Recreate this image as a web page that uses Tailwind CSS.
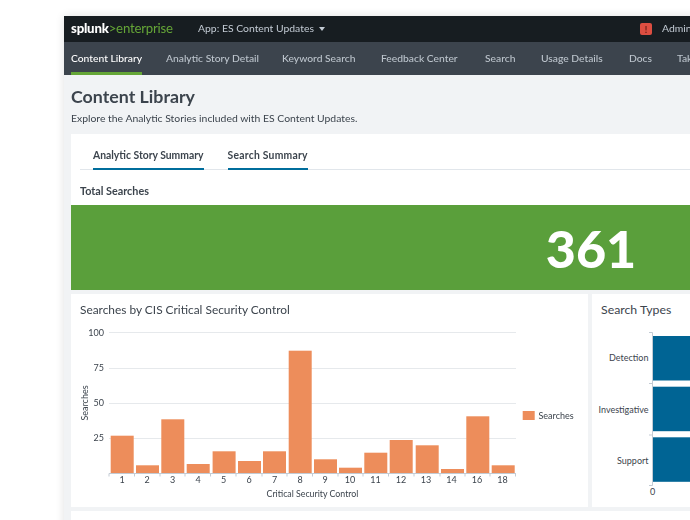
<!doctype html>
<html>
<head>
<meta charset="utf-8">
<script src="https://cdn.jsdelivr.net/npm/@tailwindcss/browser@4"></script>
</head>
<body class="bg-white">
<div class="w-[690px] h-[520px] overflow-hidden font-['Lato','Open_Sans',sans-serif] blur-[0.4px]">
  <div class="ml-16 mt-4 w-[1054px] h-[520px] bg-[#f1f3f5] shadow-[0_0_10px_rgba(0,0,0,0.12)] rounded-t-[2px]">
    <header class="h-[26px] bg-[#171d21] flex items-center pl-[7px]">
      <div class="w-[127px] text-[13.2px] leading-none tracking-[-0.2px] whitespace-nowrap"><span class="font-black text-white">splunk</span><span class="text-[#65a637]">&gt;enterprise</span></div>
      <div class="w-[442px] text-[10.4px] text-[#c3cbd4] flex items-center gap-[5px] whitespace-nowrap">App: ES Content Updates
        <span class="w-0 h-0 border-x-[3.5px] border-x-transparent border-t-[4px] border-t-[#c3cbd4]"></span></div>
      <div class="w-3 h-3 rounded-[2px] bg-[#dc4e41] flex items-center justify-center text-[#5c1a14] text-[9px] font-bold leading-none">!</div>
      <div class="ml-[10px] text-[10.4px] text-[#c3cbd4]">Administrator</div>
    </header>
    <nav class="h-[33px] bg-[#3c444d] flex gap-[24.5px] pl-[7px] text-[10.3px] font-medium text-[#bcc4cc] whitespace-nowrap">
      <a class="w-[70.5px] h-full flex items-center border-b-[3px] border-[#65a637] pt-[3px] text-white">Content Library</a>
      <a class="w-[91.5px] flex items-center">Analytic Story Detail</a>
      <a class="w-[74.5px] flex items-center">Keyword Search</a>
      <a class="w-[79.5px] flex items-center">Feedback Center</a>
      <a class="w-[31.5px] flex items-center">Search</a>
      <a class="w-[63.5px] flex items-center">Usage Details</a>
      <a class="w-[23.5px] flex items-center">Docs</a>
      <a class="flex items-center">Take Tour</a>
    </nav>
    <main class="pl-[7px] pr-[7px]">
      <h1 class="pt-[9px] text-[17.8px] leading-[24px] font-bold text-[#3c444d]">Content Library</h1>
      <p class="mt-[3px] text-[10.4px] leading-[14px] text-[#3c444d]">Explore the Analytic Stories included with ES Content Updates.</p>
      <section class="mt-[9px] bg-white h-[156px]">
        <div class="ml-[9px] h-[36px] border-b border-[#e1e6eb] flex gap-[24px] pl-[13px] text-[10.35px] font-bold text-[#3c444d]">
          <div class="h-[36px] border-b-2 border-[#006d9c] pt-[14px] leading-[14px]">Analytic Story Summary</div>
          <div class="h-[36px] border-b-2 border-[#006d9c] pt-[14px] leading-[14px] tracking-[0.25px]">Search Summary</div>
        </div>
        <div class="pl-[9px] pt-[14px] h-[35px] text-[10.8px] leading-[14px] font-bold text-[#3c444d]">Total Searches</div>
        <div class="h-[85px] bg-[#5a9f3b] flex items-center justify-center text-white text-[52px] font-black leading-none">361</div>
      </section>
      <div class="mt-[4px] flex gap-[4px] h-[213px]">
        <section class="w-[517px] bg-white relative">
          <h2 class="pl-[9px] pt-[8px] text-[11.9px] leading-[16px] text-[#3c444d]">Searches by CIS Critical Security Control</h2>
          <svg class="absolute left-0 top-0" width="517" height="213" viewBox="71 294 517 213" font-family="Lato" font-size="9" fill="#3c444d">
            <g stroke="#e6e9ec" stroke-width="1">
              <line x1="109" x2="516" y1="332.5" y2="332.5"/><line x1="109" x2="516" y1="368.5" y2="368.5"/><line x1="109" x2="516" y1="403.5" y2="403.5"/><line x1="109" x2="516" y1="438.5" y2="438.5"/>
            </g>
            <g text-anchor="end"><text x="104" y="336">100</text><text x="104" y="371">75</text><text x="104" y="406">50</text><text x="104" y="441">25</text></g>
            <text transform="translate(88 403) rotate(-90)" text-anchor="middle">Searches</text>
            <g fill="#ed8d5b">
              <rect x="110.7" y="435.7" width="23" height="37.3"/><rect x="136" y="465.3" width="23" height="7.7"/><rect x="161.3" y="419.3" width="23" height="53.7"/><rect x="186.7" y="464" width="23" height="9"/><rect x="212.6" y="451.3" width="23" height="21.7"/><rect x="238" y="461" width="23" height="12"/><rect x="263" y="451.3" width="23" height="21.7"/><rect x="288.7" y="350.7" width="23" height="122.3"/><rect x="314" y="459.3" width="23" height="13.7"/><rect x="339" y="467.7" width="23" height="5.3"/><rect x="364.3" y="452.7" width="23" height="20.3"/><rect x="389.7" y="440" width="23" height="33"/><rect x="415.7" y="445.3" width="23" height="27.7"/><rect x="441" y="469" width="23" height="4"/><rect x="466.3" y="416.3" width="23" height="56.7"/><rect x="491.7" y="465.3" width="23" height="7.7"/>
            </g>
            <path d="M109 473.5H516M109 473.5v3M134.500 473.5v3M160 473.5v3M185 473.5v3M210.500 473.500v3M236 473.500v3M262 473.500v3M287 473.500v3M312.500 473.500v3M338 473.500v3M363 473.500v3M388.500 473.500v3M414 473.500v3M440 473.500v3M465 473.500v3M490 473.500v3M515.500 473.500v3" stroke="#c3cbd4" fill="none"/>
            <g text-anchor="middle">
              <text x="122" y="482.500">1</text><text x="147" y="482.500">2</text><text x="172.500" y="482.500">3</text><text x="198" y="482.500">4</text><text x="223.500" y="482.500">5</text><text x="249" y="482.500">6</text><text x="274.500" y="482.500">7</text><text x="300" y="482.500">8</text><text x="325" y="482.500">9</text><text x="350" y="482.500">10</text><text x="375.500" y="482.500">11</text><text x="401" y="482.500">12</text><text x="426" y="482.500">13</text><text x="451.500" y="482.500">14</text><text x="477" y="482.500">16</text><text x="502.500" y="482.500">18</text>
              <text x="312.500" y="497" font-size="8.800">Critical Security Control</text>
            </g>
            <rect x="522.700" y="411" width="12" height="9" fill="#ed8d5b"/>
            <text x="538.500" y="419">Searches</text>
          </svg>
        </section>
        <section class="flex-1 bg-white relative">
          <h2 class="pl-[9px] pt-[8px] text-[12.3px] leading-[16px] text-[#3c444d]">Search Types</h2>
          <svg class="absolute left-0 top-0" width="98" height="213" viewBox="592 294 98 213" font-family="Lato" font-size="9" fill="#3c444d">
            <g fill="#006494"><rect x="653" y="336" width="60" height="44.500"/><rect x="653" y="386.700" width="60" height="44.500"/><rect x="653" y="437.300" width="60" height="44.500"/></g>
            <path d="M652.500 332.500V485.500M649 332.500h3.500M649 383.500h3.500M649 435h3.500M649 485.500h3.500" stroke="#c3cbd4" fill="none"/>
            <g text-anchor="end"><text x="648.500" y="361">Detection</text><text x="648.500" y="413">Investigative</text><text x="648.500" y="464">Support</text></g>
            <text x="652.700" y="495" text-anchor="middle">0</text>
          </svg>
        </section>
      </div>
      <section class="mt-[4px] h-[60px] bg-white"></section>
    </main>
  </div>
</div>
</body>
</html>
